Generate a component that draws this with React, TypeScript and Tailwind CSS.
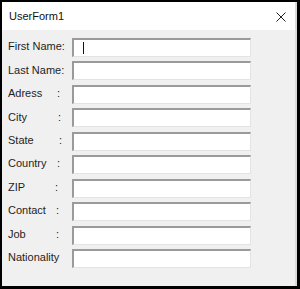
import React from 'react';

const fields = [
  { label: 'First Name:', colon: null },
  { label: 'Last Name:', colon: null },
  { label: 'Adress', colon: 49 },
  { label: 'City', colon: 50 },
  { label: 'State', colon: 51 },
  { label: 'Country', colon: 49 },
  { label: 'ZIP', colon: 47 },
  { label: 'Contact', colon: 48 },
  { label: 'Job', colon: 48 },
  { label: 'Nationality', colon: null },
];

function TextBox({ focused }: { focused?: boolean }) {
  return (
    <div className="h-[19px] w-[179px] bg-white border-t-2 border-l-2 border-r border-b border-t-[#9a9a9a] border-l-[#9a9a9a] border-r-[#e3e3e3] border-b-[#e3e3e3] flex items-center">
      {focused && <div className="ml-[9px] w-px h-[12px] bg-[#111]" />}
    </div>
  );
}

export default function App() {
  return (
    <div
      className="w-[300px] h-[289px] bg-black pt-[2px] pl-[2px] pr-[3px] pb-[3px]"
      style={{ fontFamily: '"Liberation Sans", Arial, sans-serif' }}
    >
      <div className="w-full h-full flex flex-col bg-[#f0f0f0] border-r-2 border-[#dadada]">
        <div className="h-[28px] bg-white flex items-center justify-between pl-[7px] pr-[9px]">
          <span className="text-[11px] text-[#111] mt-[1px]">UserForm1</span>
          <svg width="10" height="10" viewBox="0 0 10 10" className="mt-[1px]">
            <path d="M0.5 0.5 L9.5 9.5 M9.5 0.5 L0.5 9.5" stroke="#222" strokeWidth="1" fill="none" />
          </svg>
        </div>
        <div className="flex flex-col gap-[4.45px] pt-[8px] pl-[6px]">
          {fields.map((f, i) => (
            <div key={f.label} className="flex items-center h-[19px]">
              <div className="w-[64px] flex text-[11px] text-[#1e1e1e] mb-[2px]">
                {f.colon === null ? (
                  <span>{f.label}</span>
                ) : (
                  <>
                    <span className="shrink-0" style={{ width: f.colon }}>{f.label}</span>
                    <span>:</span>
                  </>
                )}
              </div>
              <TextBox focused={i === 0} />
            </div>
          ))}
        </div>
      </div>
    </div>
  );
}
